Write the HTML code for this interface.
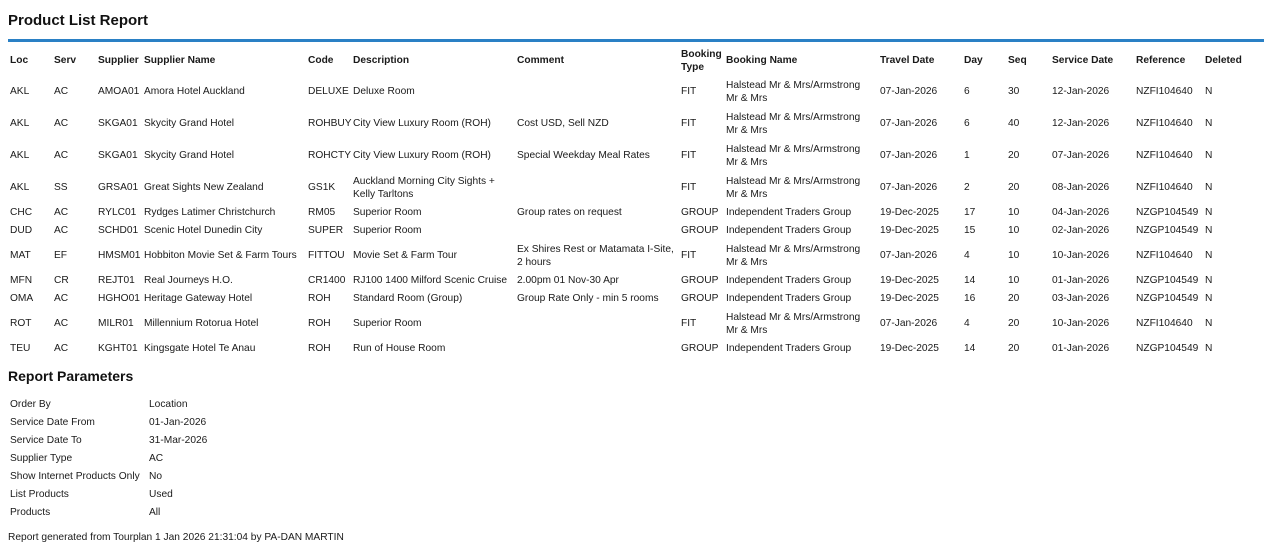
<!DOCTYPE html>
<html><head><meta charset="utf-8"><style>
body{margin:0;width:1264px;height:559px;background:#fff;font-family:"Liberation Sans",sans-serif;color:#1a1a1a;font-size:10.2px;overflow:hidden;position:relative}
h1{position:absolute;left:8px;top:12px;margin:0;font-size:15px;font-weight:bold;color:#111}
.bar{position:absolute;left:8px;right:0;top:39px;height:3px;background:#2a80c5}
table{position:absolute;left:8px;top:46px;border-collapse:collapse;table-layout:fixed;width:1256px}
td{padding:0 0 0 2px;vertical-align:middle;white-space:nowrap;line-height:13.5px;overflow:visible}
tr.h td{font-weight:bold;height:30px}
tr.d td{height:32px}
tr.s td{height:18px}
h2{position:absolute;left:8px;top:368px;margin:0;font-size:14px;font-weight:bold;color:#111}
.p{position:absolute;left:10px;line-height:14px}
.v{position:absolute;left:149px;line-height:14px}
.f{position:absolute;left:8px;top:532px}
</style></head><body>
<h1>Product List Report</h1>
<div class="bar"></div>
<table>
<colgroup><col style="width:44px"><col style="width:44px"><col style="width:46px"><col style="width:164px"><col style="width:45px"><col style="width:164px"><col style="width:164px"><col style="width:45px"><col style="width:154px"><col style="width:84px"><col style="width:44px"><col style="width:44px"><col style="width:84px"><col style="width:69px"><col style="width:61px"></colgroup>
<tr class="h"><td>Loc</td><td>Serv</td><td>Supplier</td><td>Supplier Name</td><td>Code</td><td>Description</td><td>Comment</td><td>Booking<br>Type</td><td>Booking Name</td><td>Travel Date</td><td>Day</td><td>Seq</td><td>Service Date</td><td>Reference</td><td>Deleted</td></tr>
<tr class="d"><td>AKL</td><td>AC</td><td>AMOA01</td><td>Amora Hotel Auckland</td><td>DELUXE</td><td>Deluxe Room</td><td></td><td>FIT</td><td>Halstead Mr &amp; Mrs/Armstrong<br>Mr &amp; Mrs</td><td>07-Jan-2026</td><td>6</td><td>30</td><td>12-Jan-2026</td><td>NZFI104640</td><td>N</td></tr>
<tr class="d"><td>AKL</td><td>AC</td><td>SKGA01</td><td>Skycity Grand Hotel</td><td>ROHBUY</td><td>City View Luxury Room (ROH)</td><td>Cost USD, Sell NZD</td><td>FIT</td><td>Halstead Mr &amp; Mrs/Armstrong<br>Mr &amp; Mrs</td><td>07-Jan-2026</td><td>6</td><td>40</td><td>12-Jan-2026</td><td>NZFI104640</td><td>N</td></tr>
<tr class="d"><td>AKL</td><td>AC</td><td>SKGA01</td><td>Skycity Grand Hotel</td><td>ROHCTY</td><td>City View Luxury Room (ROH)</td><td>Special Weekday Meal Rates</td><td>FIT</td><td>Halstead Mr &amp; Mrs/Armstrong<br>Mr &amp; Mrs</td><td>07-Jan-2026</td><td>1</td><td>20</td><td>07-Jan-2026</td><td>NZFI104640</td><td>N</td></tr>
<tr class="d"><td>AKL</td><td>SS</td><td>GRSA01</td><td>Great Sights New Zealand</td><td>GS1K</td><td>Auckland Morning City Sights +<br>Kelly Tarltons</td><td></td><td>FIT</td><td>Halstead Mr &amp; Mrs/Armstrong<br>Mr &amp; Mrs</td><td>07-Jan-2026</td><td>2</td><td>20</td><td>08-Jan-2026</td><td>NZFI104640</td><td>N</td></tr>
<tr class="s"><td>CHC</td><td>AC</td><td>RYLC01</td><td>Rydges Latimer Christchurch</td><td>RM05</td><td>Superior Room</td><td>Group rates on request</td><td>GROUP</td><td>Independent Traders Group</td><td>19-Dec-2025</td><td>17</td><td>10</td><td>04-Jan-2026</td><td>NZGP104549</td><td>N</td></tr>
<tr class="s"><td>DUD</td><td>AC</td><td>SCHD01</td><td>Scenic Hotel Dunedin City</td><td>SUPER</td><td>Superior Room</td><td></td><td>GROUP</td><td>Independent Traders Group</td><td>19-Dec-2025</td><td>15</td><td>10</td><td>02-Jan-2026</td><td>NZGP104549</td><td>N</td></tr>
<tr class="d"><td>MAT</td><td>EF</td><td>HMSM01</td><td>Hobbiton Movie Set &amp; Farm Tours</td><td>FITTOU</td><td>Movie Set &amp; Farm Tour</td><td>Ex Shires Rest or Matamata I-Site,<br>2 hours</td><td>FIT</td><td>Halstead Mr &amp; Mrs/Armstrong<br>Mr &amp; Mrs</td><td>07-Jan-2026</td><td>4</td><td>10</td><td>10-Jan-2026</td><td>NZFI104640</td><td>N</td></tr>
<tr class="s"><td>MFN</td><td>CR</td><td>REJT01</td><td>Real Journeys H.O.</td><td>CR1400</td><td>RJ100 1400 Milford Scenic Cruise</td><td>2.00pm 01 Nov-30 Apr</td><td>GROUP</td><td>Independent Traders Group</td><td>19-Dec-2025</td><td>14</td><td>10</td><td>01-Jan-2026</td><td>NZGP104549</td><td>N</td></tr>
<tr class="s"><td>OMA</td><td>AC</td><td>HGHO01</td><td>Heritage Gateway Hotel</td><td>ROH</td><td>Standard Room (Group)</td><td>Group Rate Only - min 5 rooms</td><td>GROUP</td><td>Independent Traders Group</td><td>19-Dec-2025</td><td>16</td><td>20</td><td>03-Jan-2026</td><td>NZGP104549</td><td>N</td></tr>
<tr class="d"><td>ROT</td><td>AC</td><td>MILR01</td><td>Millennium Rotorua Hotel</td><td>ROH</td><td>Superior Room</td><td></td><td>FIT</td><td>Halstead Mr &amp; Mrs/Armstrong<br>Mr &amp; Mrs</td><td>07-Jan-2026</td><td>4</td><td>20</td><td>10-Jan-2026</td><td>NZFI104640</td><td>N</td></tr>
<tr class="s"><td>TEU</td><td>AC</td><td>KGHT01</td><td>Kingsgate Hotel Te Anau</td><td>ROH</td><td>Run of House Room</td><td></td><td>GROUP</td><td>Independent Traders Group</td><td>19-Dec-2025</td><td>14</td><td>20</td><td>01-Jan-2026</td><td>NZGP104549</td><td>N</td></tr>
</table>
<h2>Report Parameters</h2>
<div class="p" style="top:398px">Order By</div><div class="v" style="top:398px">Location</div>
<div class="p" style="top:416px">Service Date From</div><div class="v" style="top:416px">01-Jan-2026</div>
<div class="p" style="top:434px">Service Date To</div><div class="v" style="top:434px">31-Mar-2026</div>
<div class="p" style="top:452px">Supplier Type</div><div class="v" style="top:452px">AC</div>
<div class="p" style="top:470px">Show Internet Products Only</div><div class="v" style="top:470px">No</div>
<div class="p" style="top:488px">List Products</div><div class="v" style="top:488px">Used</div>
<div class="p" style="top:506px">Products</div><div class="v" style="top:506px">All</div>
<div class="f">Report generated from Tourplan 1 Jan 2026 21:31:04 by PA-DAN MARTIN</div>
</body></html>
